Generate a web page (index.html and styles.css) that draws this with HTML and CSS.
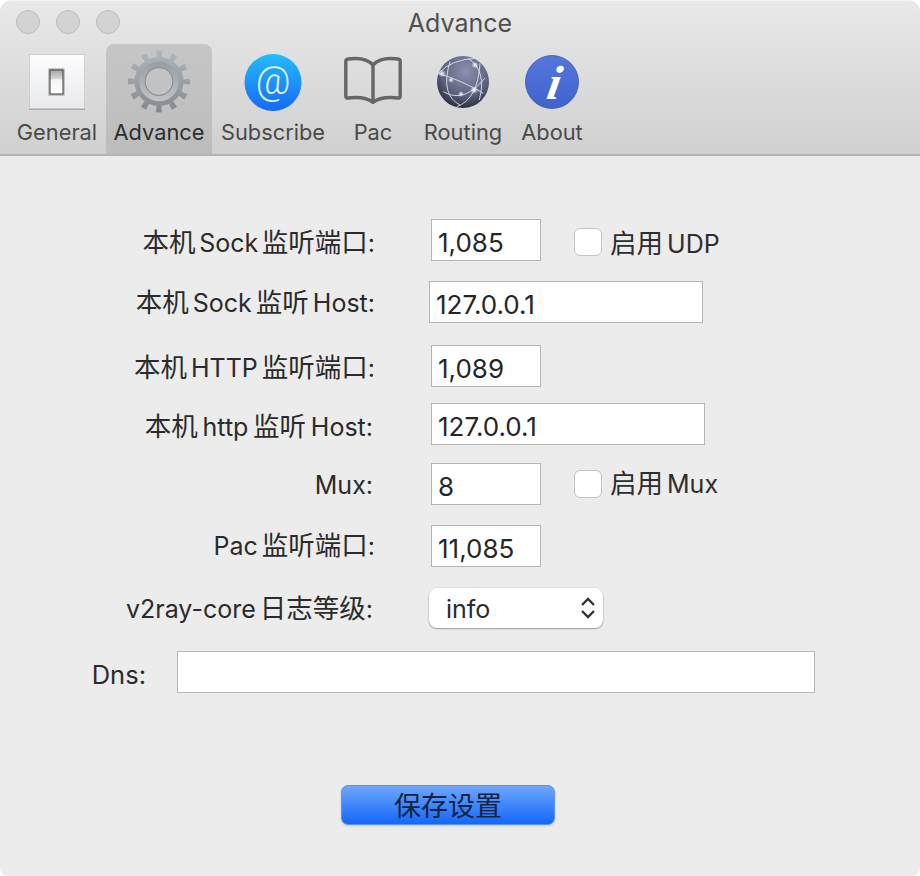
FILE: index.html
```html
<!DOCTYPE html>
<html lang="zh">
<head>
<meta charset="utf-8">
<title>Advance</title>
<link rel="stylesheet" href="styles.css">
</head>
<body>
<div class="window">
  <header class="toolbar">
    <div class="titlebar">
      <div class="lights"><span class="light"></span><span class="light"></span><span class="light"></span></div>
      <div class="title">Advance</div>
    </div>
    <nav class="tabs">
      <div class="tab tab-general">
        <svg class="icon" viewBox="0 0 60 60"><defs><linearGradient id="plate" x1="0" y1="0" x2="0" y2="1"><stop offset="0" stop-color="#fcfcfd"/><stop offset="1" stop-color="#e8e9ec"/></linearGradient><linearGradient id="sw" x1="0" y1="0" x2="0" y2="1"><stop offset="0" stop-color="#a6a6a6"/><stop offset=".38" stop-color="#d8d8d8"/><stop offset=".4" stop-color="#f4f4f4"/><stop offset="1" stop-color="#fff"/></linearGradient></defs><rect x="2.500" y="0.500" width="55" height="55" fill="url(#plate)" stroke="#cfcfcf" stroke-width="1"/><rect x="2" y="54.500" width="56" height="1.500" fill="#a8a8a8"/><rect x="21" y="14" width="17" height="28" rx="1.500" fill="#c4c4c4"/><rect x="23" y="16" width="13" height="24" fill="url(#sw)" stroke="#3a3a3a" stroke-width="1"/></svg>
        <span class="tab-label">General</span>
      </div>
      <div class="tab tab-advance active">
        <svg class="icon" viewBox="0 0 60 60"><defs><linearGradient id="gear" gradientUnits="userSpaceOnUse" x1="0" y1="-4" x2="0" y2="59"><stop offset="0" stop-color="#b0b6ba"/><stop offset="1" stop-color="#83898e"/></linearGradient><linearGradient id="gearring" gradientUnits="userSpaceOnUse" x1="0" y1="8" x2="0" y2="48"><stop offset="0" stop-color="#979da1"/><stop offset="1" stop-color="#c0c4c7"/></linearGradient></defs><circle cx="30" cy="27.500" r="27.500" fill="none" stroke="url(#gear)" stroke-width="7" stroke-dasharray="5.500 8.900" stroke-dashoffset="2.750"/><circle cx="30" cy="27.500" r="19" fill="none" stroke="url(#gear)" stroke-width="11"/><circle cx="30" cy="27.500" r="17" fill="none" stroke="url(#gearring)" stroke-width="5.500"/><circle cx="30" cy="27.500" r="14" fill="none" stroke="#7f8589" stroke-width=".8"/></svg>
        <span class="tab-label">Advance</span>
      </div>
      <div class="tab tab-subscribe">
        <svg class="icon" viewBox="0 0 60 60"><defs><linearGradient id="blue" x1="0" y1="0" x2="0" y2="1"><stop offset="0" stop-color="#23bcfb"/><stop offset="1" stop-color="#1769f4"/></linearGradient></defs><circle cx="30" cy="28.500" r="28.500" fill="url(#blue)"/><text x="30" y="40" class="at">@</text></svg>
        <span class="tab-label">Subscribe</span>
      </div>
      <div class="tab tab-pac">
        <svg class="icon" viewBox="0 0 60 60"><path d="M30 11C25 5.500 16 3.500 5 5 3.500 5.200 2.800 6 2.800 7.500V42C2.800 43.500 3.600 44.200 5 44 14 43 24 43.500 30 48.500 36 43.500 46 43 55 44 56.400 44.200 57.200 43.500 57.200 42V7.500C57.200 6 56.500 5.200 55 5 44 3.500 35 5.500 30 11ZM30 11V47" fill="none" stroke="#666" stroke-width="3.400" stroke-linejoin="round" stroke-linecap="round"/></svg>
        <span class="tab-label">Pac</span>
      </div>
      <div class="tab tab-routing">
        <svg class="icon" viewBox="0 0 60 60"><defs><radialGradient id="globe" cx=".55" cy=".3" r=".75"><stop offset="0" stop-color="#8b91ae"/><stop offset=".6" stop-color="#5e6480"/><stop offset="1" stop-color="#23252f"/></radialGradient><radialGradient id="glow"><stop offset="0" stop-color="#fff"/><stop offset="1" stop-color="#fff" stop-opacity="0"/></radialGradient></defs><circle cx="30" cy="28" r="26" fill="url(#globe)"/><g fill="none" stroke="#e3e6f4" stroke-width="1" stroke-opacity=".85"><path d="M5.300 19.300Q19 5 43.700 4.300"/><path d="M5.300 19.300Q30 27 50.300 39.300"/><path d="M17 7.700Q7 41 27 51"/><path d="M47 9.300Q45 45 23.700 52.700"/><path d="M35.300 4.300Q54 17 46.300 46"/><path d="M10.300 37.700Q31 50 52 24"/></g><circle cx="9" cy="19.500" r="4" fill="url(#glow)"/><circle cx="42" cy="11" r="3.500" fill="url(#glow)"/><circle cx="41" cy="36" r="4" fill="url(#glow)"/><circle cx="28" cy="40" r="3" fill="url(#glow)"/><circle cx="18" cy="26" r="3" fill="url(#glow)"/></svg>
        <span class="tab-label">Routing</span>
      </div>
      <div class="tab tab-about">
        <svg class="icon" viewBox="0 0 60 60"><defs><linearGradient id="info" x1="0" y1="0" x2="0" y2="1"><stop offset="0" stop-color="#5577dc"/><stop offset="1" stop-color="#3f62cd"/></linearGradient></defs><circle cx="30" cy="28" r="26.500" fill="url(#info)" stroke="#3c58ad" stroke-width=".8"/><text transform="translate(30 45) skewX(-10)" class="info-i">i</text></svg>
        <span class="tab-label">About</span>
      </div>
    </nav>
  </header>

  <main class="form">
    <div class="row row-a">
      <label class="label"><span class="zh">本机</span> Sock <span class="zh">监听端口</span>:</label>
      <div class="field field-short">1,085</div>
      <div class="check"><span class="box"></span><span><span class="zh">启用</span> UDP</span></div>
    </div>
    <div class="row row-b">
      <label class="label"><span class="zh">本机</span> Sock <span class="zh">监听</span> Host:</label>
      <div class="field field-long shift">127.0.0.1</div>
    </div>
    <div class="row row-c">
      <label class="label"><span class="zh">本机</span> HTTP <span class="zh">监听端口</span>:</label>
      <div class="field field-short">1,089</div>
    </div>
    <div class="row row-d">
      <label class="label nudge"><span class="zh">本机</span> http <span class="zh">监听</span> Host:</label>
      <div class="field field-long">127.0.0.1</div>
    </div>
    <div class="row row-e">
      <label class="label nudge">Mux:</label>
      <div class="field field-short">8</div>
      <div class="check"><span class="box"></span><span><span class="zh">启用</span> Mux</span></div>
    </div>
    <div class="row row-f">
      <label class="label">Pac <span class="zh">监听端口</span>:</label>
      <div class="field field-short">11,085</div>
    </div>
    <div class="row row-g">
      <label class="label nudge">v2ray-core <span class="zh">日志等级</span>:</label>
      <div class="select shift"><span>info</span>
        <svg class="chev" viewBox="0 0 16 24"><path d="M2 9 8 3 14 9M2 15 8 21 14 15" fill="none" stroke="#333" stroke-width="2.400"/></svg>
      </div>
    </div>
    <div class="row row-h">
      <label class="label-dns">Dns:</label>
      <div class="field field-dns"></div>
    </div>
    <div class="actions"><button class="save">保存设置</button></div>
  </main>
</div>
</body>
</html>
```

FILE: styles.css
```css
* { box-sizing: border-box; }
html, body { margin: 0; background: #fff; }
body { width: 920px; height: 876px; overflow: hidden; font-family: Inter, "Noto Sans CJK SC", sans-serif; color: #2b2b2b; }
.window { width: 920px; height: 876px; background: #ececec; border-radius: 12px 12px 8px 8px; overflow: hidden; }

.toolbar { height: 156px; background: linear-gradient(#e9e9e9, #d0d0d0); border-bottom: 2px solid #b4b4b4; box-shadow: inset 0 1px 0 #f4f4f4; }
.titlebar { height: 44px; display: flex; align-items: center; justify-content: center; position: relative; }
.lights { position: absolute; left: 16px; top: 10px; display: flex; gap: 16px; }
.light { width: 24px; height: 24px; border-radius: 50%; background: #d3d3d3; border: 1px solid #bcbcbc; }
.title { font-size: 25px; color: #4f4f4f; margin-top: 2px; }

.tabs { display: flex; padding-left: 8px; height: 110px; }
.tab { display: flex; flex-direction: column; align-items: center; padding-top: 10px; border-radius: 8px 8px 0 0; }
.tab-general { width: 98px; }
.tab-advance { width: 106px; }
.tab-subscribe { width: 122px; }
.tab-pac { width: 78px; }
.tab-routing { width: 102px; }
.tab-about { width: 76px; }
.active { background: linear-gradient(#c6c6c6, #bcbcbc); }
.active .tab-label { color: #2e2e2e; }
.icon { width: 60px; height: 60px; display: block; overflow: visible; }
.tab-label { font-size: 21.8px; line-height: 28px; margin-top: 4px; color: #4a4a4a; white-space: nowrap; }
.at { font-family: Roboto, sans-serif; font-weight: 300; font-size: 38px; fill: #e4f3ff; text-anchor: middle; }
.info-i { font-family: "Liberation Serif", serif; font-style: italic; font-weight: 700; font-size: 48px; fill: #fff; text-anchor: middle; }

.form { padding-top: 63px; display: flex; flex-direction: column; }
.row { display: flex; align-items: center; }
.row-a { height: 42px; }
.row-b { height: 42px; margin-top: 20px; }
.row-c { height: 42px; margin-top: 22px; }
.row-d { height: 42px; margin-top: 16px; }
.row-e { height: 42px; margin-top: 18px; }
.row-f { height: 42px; margin-top: 20px; }
.row-g { height: 40px; margin-top: 21px; }
.row-h { height: 42px; margin-top: 23px; }

.zh { font-size: 26.5px; }
.label { width: 375px; text-align: right; font-size: 25px; line-height: 32px; word-spacing: -3px; white-space: nowrap; margin-right: 56px; }
.label.nudge { width: 373px; margin-right: 58px; }
.label-dns { width: 146px; text-align: right; font-size: 25.5px; line-height: 32px; margin-right: 31px; margin-top: 5px; }
.shift { margin-left: -2px; }
.row-a .label { margin-top: 4px; word-spacing: -3.400px; }
.row-b .label { margin-top: 1px; }
.row-c .label { margin-top: 3px; }
.row-d .label { margin-top: 4px; word-spacing: -2.300px; }
.row-e .label { margin-top: 2px; }
.row-f .label { margin-bottom: 1px; }
.row-g .label { margin-top: 1px; }

.field { height: 42px; background: #fff; border: 1px solid #b5b5b5; font-size: 26px; line-height: 46px; padding-left: 6px; color: #262626; }
.field-short { width: 110px; }
.field-long { width: 274px; }
.field-dns { width: 638px; }

.check { display: flex; align-items: center; gap: 8px; margin-left: 33px; font-size: 25px; line-height: 32px; word-spacing: -3px; color: #2e2e2e; }
.row-a .check > span:last-child { margin-top: 6px; }
.row-a .box { margin-top: 4px; }
.row-e .check > span:last-child { margin-bottom: 2px; }
.box { width: 28px; height: 28px; background: #fff; border: 1px solid #c4c4c4; border-radius: 6px; display: block; }

.select { width: 174px; height: 40px; background: #fff; border-radius: 8px; box-shadow: 0 1px 1.500px rgba(0,0,0,.3), 0 0 0 .5px rgba(0,0,0,.1); display: flex; align-items: center; justify-content: space-between; padding: 2px 7px 0 17px; font-size: 25px; color: #2b2b2b; }
.chev { width: 16px; height: 26px; margin-top: -2px; }

.actions { display: flex; justify-content: center; margin-top: 92px; padding-right: 24px; }
.save { width: 214px; height: 40px; border: 1px solid #5d93ea; border-radius: 7px; background: linear-gradient(#6fa6fa, #1367fb); color: #14233f; font-family: "Noto Sans CJK SC", sans-serif; font-size: 27px; line-height: 36px; padding: 0; box-shadow: 0 1px 2px rgba(0,0,0,.15); }
```
